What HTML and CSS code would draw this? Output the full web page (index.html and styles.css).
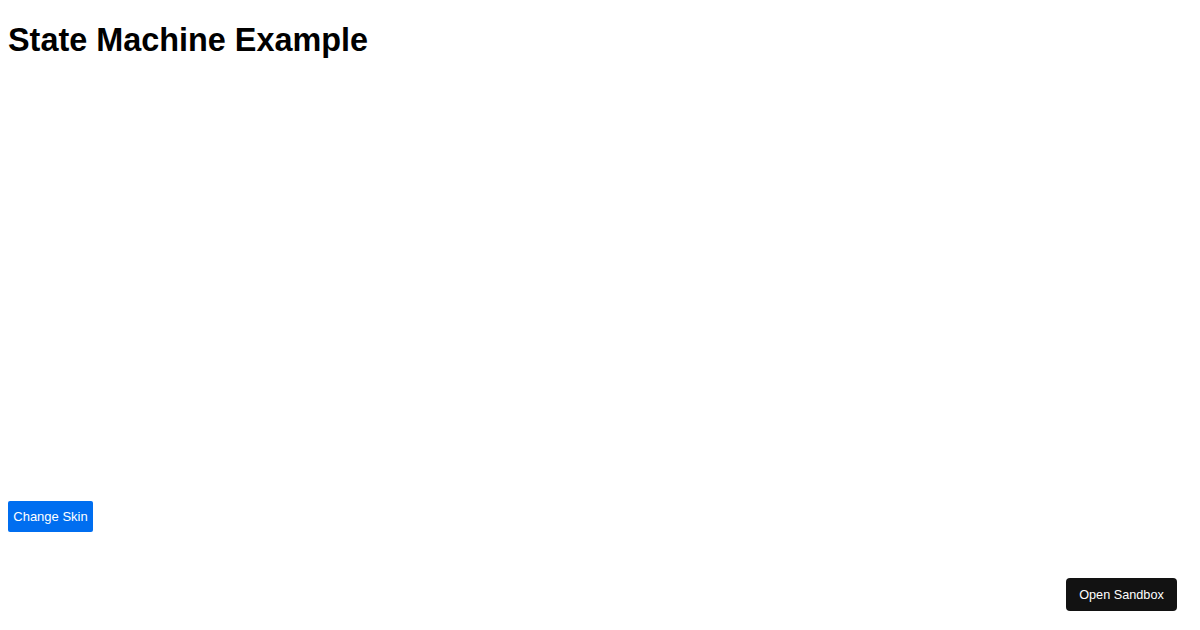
FILE: index.html
```html
<!DOCTYPE html>
<html>
<head>
<meta charset="utf-8">
<link rel="stylesheet" href="styles.css">
</head>
<body>
<h1 class="title">State Machine Example</h1>
<div class="stage"></div>
<button class="skin-btn">Change Skin</button>
<button class="sandbox-btn">Open Sandbox</button>
</body>
</html>
```
FILE: styles.css
```css
body {
  margin: 8px;
  font-family: "Liberation Sans", Arial, sans-serif;
  background: #fff;
  color: #000;
}
.title {
  font-size: 32.4px;
  font-weight: bold;
  margin: 14px 0 0;
  line-height: 37px;
}
.stage {
  height: 442px;
}
.skin-btn {
  display: block;
  height: 31px;
  width: 85px;
  padding: 0;
  border: none;
  border-radius: 2px;
  background: #006ef0;
  color: #fff;
  font-family: "Liberation Sans", Arial, sans-serif;
  font-size: 13px;
}
.sandbox-btn {
  position: fixed;
  right: 23px;
  bottom: 19px;
  width: 111px;
  height: 33px;
  padding: 0;
  border: none;
  border-radius: 4px;
  background: #121212;
  color: #fff;
  font-family: "Liberation Sans", Arial, sans-serif;
  font-size: 12.7px;
}
```
